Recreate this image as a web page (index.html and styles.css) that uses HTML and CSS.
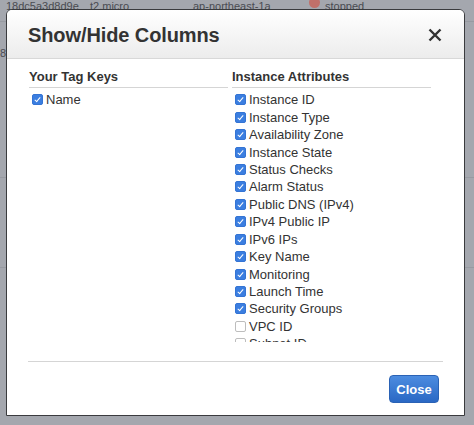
FILE: index.html
```html
<!DOCTYPE html>
<html>
<head>
<meta charset="utf-8">
<link rel="stylesheet" href="styles.css">
</head>
<body>
<div class="bg">
  <div class="bg-row r1">
    <span class="c1">18dc5a3d8d9e</span><span class="c2">t2.micro</span><span class="c3">ap-northeast-1a</span><span class="dot"></span><span class="c4">stopped</span>
  </div>
  <div class="bg-row r2"><span class="c0">8</span></div>
  <div class="bg-row r3"></div>
</div>
<div class="modal">
  <div class="header">
    <h1 class="title">Show/Hide Columns</h1>
    <svg class="x" width="14" height="14" viewBox="0 0 14 14"><path d="M1.5 1.5 L12.5 12.5 M12.5 1.5 L1.5 12.5" stroke="#333" stroke-width="2.4" stroke-linecap="butt"/></svg>
  </div>
  <div class="body">
    <div class="cols">
      <div class="col">
        <div class="col-head">Your Tag Keys</div>
        <ul class="list">
          <li><span class="cb on"></span>Name</li>
        </ul>
      </div>
      <div class="col">
        <div class="col-head">Instance Attributes</div>
        <ul class="list">
          <li><span class="cb on"></span>Instance ID</li>
          <li><span class="cb on"></span>Instance Type</li>
          <li><span class="cb on"></span>Availability Zone</li>
          <li><span class="cb on"></span>Instance State</li>
          <li><span class="cb on"></span>Status Checks</li>
          <li><span class="cb on"></span>Alarm Status</li>
          <li><span class="cb on"></span>Public DNS (IPv4)</li>
          <li><span class="cb on"></span>IPv4 Public IP</li>
          <li><span class="cb on"></span>IPv6 IPs</li>
          <li><span class="cb on"></span>Key Name</li>
          <li><span class="cb on"></span>Monitoring</li>
          <li><span class="cb on"></span>Launch Time</li>
          <li><span class="cb on"></span>Security Groups</li>
          <li><span class="cb"></span>VPC ID</li>
          <li><span class="cb"></span>Subnet ID</li>
          <li><span class="cb"></span>Network Interfaces</li>
        </ul>
      </div>
    </div>
  </div>
  <div class="footer">
    <button class="btn">Close</button>
  </div>
</div>
</body>
</html>
```

FILE: styles.css
```css
html, body {
  margin: 0;
  padding: 0;
}
body {
  width: 474px;
  height: 425px;
  overflow: hidden;
  background: #a4a7ae;
  font-family: "Liberation Sans", Arial, sans-serif;
  position: relative;
}
.bg-row {
  border-bottom: 1px solid #979aa1;
  font-size: 11px;
  color: #4a4c52;
  display: flex;
  align-items: flex-start;
  white-space: nowrap;
  box-sizing: border-box;
}
.r1 { height: 22px; padding-top: 0; }
.r1 span { margin-top: 0; }
.c1 { margin-left: 6px; width: 84px; }
.c2 { width: 103px; }
.c3 { width: 116px; }
.dot {
  width: 11px; height: 11px; border-radius: 50%;
  background: #c0706a; margin-right: 5px; margin-top: -3px !important;
}
.r2 { height: 156px; padding-top: 25px; }
.r2 .c0 { margin-left: 0; }
.r3 { height: 90px; }

.modal {
  position: absolute;
  left: 6px;
  top: 9px;
  width: 457px;
  height: 405px;
  background: #fff;
  border: 1.5px solid #3a3b3e;
  border-radius: 6px 6px 0 0;
  box-sizing: content-box;
  display: flex;
  flex-direction: column;
  overflow: hidden;
}
.header {
  height: 48px;
  background: linear-gradient(#ffffff, #ececec);
  border-bottom: 1px solid #d8d8d8;
  display: flex;
  align-items: center;
  padding: 0 22px 0 21px;
  flex-shrink: 0;
}
.title {
  flex: 1;
  margin: 0;
  font-size: 20px;
  font-weight: bold;
  color: #333;
  letter-spacing: -0.1px;
  padding-top: 7px;
  margin-top: -5px;
}
.x { display: block; margin-top: 1px; }
.body {
  height: 283px;
  overflow: hidden;
  padding: 0 31px 0 22px;
  flex-shrink: 0;
}
.cols {
  display: flex;
  gap: 4px;
}
.col { width: 199px; }
.col-head {
  font-size: 13px;
  font-weight: bold;
  color: #333;
  padding-top: 10px;
  height: 18px;
  border-bottom: 1px solid #d5d5d5;
  margin-bottom: 3px;
}
.list {
  list-style: none;
  margin: 0;
  padding: 0 0 0 3px;
}
.list li {
  display: flex;
  align-items: center;
  height: 17.45px;
  font-size: 13px;
  color: #333;
}
.cb {
  width: 9px;
  height: 9px;
  border: 1px solid #bdbdbd;
  border-radius: 2px;
  background: #fff;
  margin-right: 3px;
  flex-shrink: 0;
  position: relative;
}
.cb.on {
  background: #3b7ee0;
  border-color: #3474d4;
}
.cb.on::after {
  content: "";
  position: absolute;
  left: 3px;
  top: 1px;
  width: 2px;
  height: 5px;
  border: solid #fff;
  border-width: 0 1.5px 1.5px 0;
  transform: rotate(40deg);
}
.footer {
  margin: 19px 21px 0 21px;
  border-top: 1px solid #d5d5d5;
  display: flex;
  justify-content: flex-end;
  padding-top: 13px;
  padding-right: 4px;
}
.btn {
  width: 50px;
  height: 28px;
  border: 1px solid #2a62b5;
  border-radius: 4px;
  background: linear-gradient(#4c8ce0, #2a68c4);
  color: #fff;
  font-family: "Liberation Sans", Arial, sans-serif;
  font-weight: bold;
  font-size: 13px;
  padding: 0;
}
```
